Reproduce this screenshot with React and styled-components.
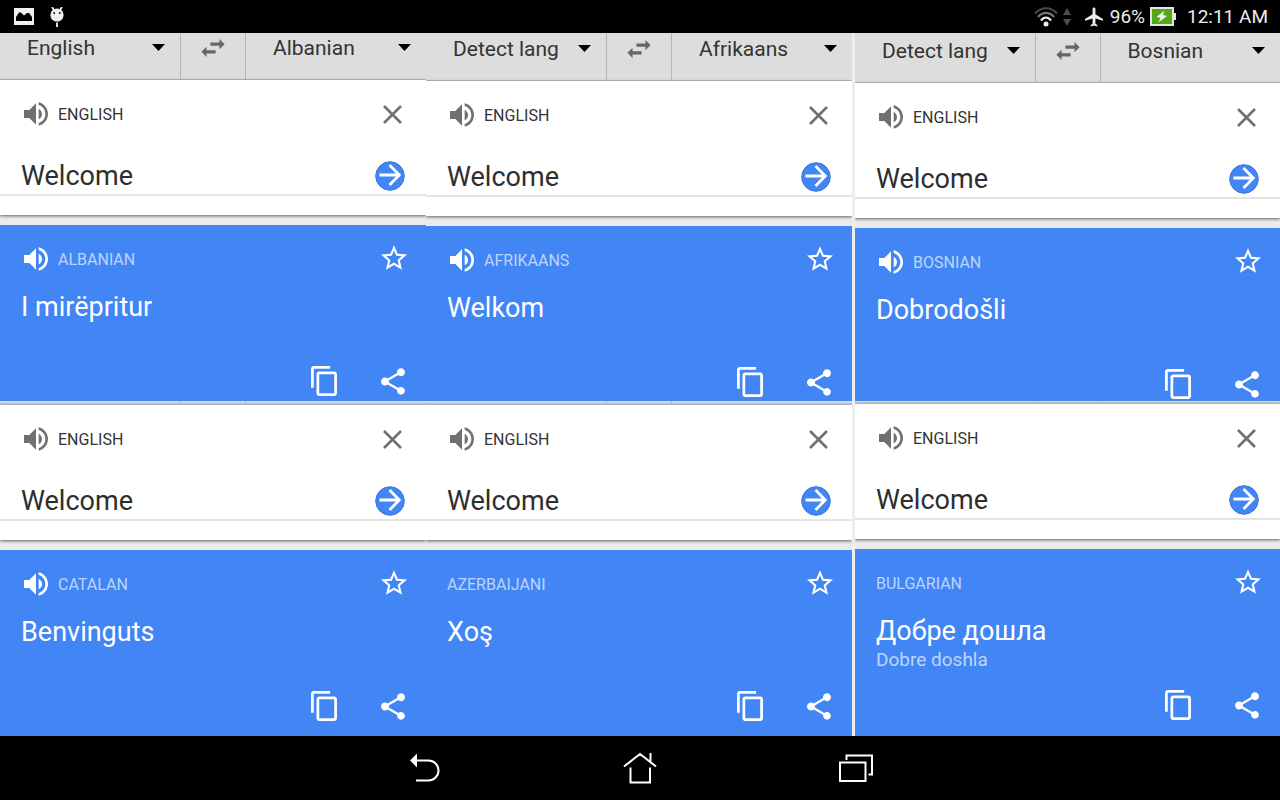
import React from "react";
import styled, { createGlobalStyle } from "styled-components";

const GlobalStyle = createGlobalStyle`
  *, *::before, *::after { box-sizing: border-box; }
  body { margin: 0; background: #000; }
  body, button, input, select { font-family: Roboto, "Noto Sans", sans-serif; }
`;

const Screen = styled.div`
  display: flex;
  flex-direction: column;
  min-height: 100vh;
  background: #000;
`;

const StatusBar = styled.header`
  display: flex;
  align-items: center;
  justify-content: space-between;
  height: 33px;
  padding: 0 12px 0 14px;
  color: #ededed;
  font-size: 19px;
  line-height: 33px;
`;

const StatusGroup = styled.div`
  display: flex;
  align-items: center;
  gap: ${(p) => p.$gap}px;
`;

const Charge = styled.span`
  margin-left: 2px;
`;

const Clock = styled.time`
  margin-left: 6px;
`;

const Board = styled.main`
  flex: 1;
  display: grid;
  grid-template-columns: 426fr 426fr 428fr;
  grid-template-rows: 368fr 335fr;
  background: #ebebeb;
`;

const Tile = styled.section`
  display: flex;
  flex-direction: column;
  min-width: 0;
  min-height: 0;
  overflow: hidden;
  background: #ebebeb;
  border-left: ${(p) => (p.$divided ? "3px solid #ededed" : "0")};
`;

const LanguageBar = styled.div`
  flex: none;
  display: flex;
  align-items: flex-end;
  height: ${(p) => p.$visible}px;
  overflow: hidden;
  background: ${(p) => (p.$sliver ? "#c9dbf5" : "#dddddd")};
  border-bottom: ${(p) => (p.$sliver ? 2 : 1)}px solid ${(p) => (p.$sliver ? "#c6c6c8" : "#bebebe")};
`;

const LanguageRow = styled.div`
  flex: 1;
  display: grid;
  grid-template-columns: 1fr 66px 1fr;
  height: 63px;
`;

const Picker = styled.label`
  display: flex;
  align-items: center;
  min-width: 0;
  padding: 0 15px 0 27px;
`;

const Select = styled.select`
  flex: 1;
  min-width: 0;
  padding: 0;
  border: 0;
  appearance: none;
  background: transparent;
  color: #333;
  font-size: 21px;
  line-height: 28px;
`;

const IconButton = styled.button`
  display: flex;
  align-items: center;
  justify-content: center;
  padding: 0;
  border: 0;
  background: transparent;
  color: inherit;
  svg { display: block; }
`;

const SwapButton = styled(IconButton)`
  border: solid #b5b5b5;
  border-width: 0 1px;
  color: #666;
`;

const VolumeButton = styled(IconButton)`
  padding: 0 10px 0 3px;
`;

const StarButton = styled(IconButton)`
  padding-bottom: 3px;
`;

const SourceCard = styled.div`
  flex: none;
  position: relative;
  height: 135px;
  margin-bottom: 10px;
  background: #fff;
  color: #707070;
  box-shadow: 0 1px 3px rgba(0, 0, 0, 0.6);
`;

const CardHead = styled.div`
  display: flex;
  align-items: center;
  justify-content: space-between;
  height: 68px;
  padding: 0 ${(p) => p.$right}px 0 21px;
`;

const Heading = styled.div`
  display: flex;
  align-items: center;
`;

const SourceLabel = styled.label`
  padding-top: 2px;
  color: #333;
  font-size: 16px;
  line-height: 20px;
`;

const TargetLabel = styled.h2`
  margin: 0;
  padding-top: 2px;
  color: #bcd5ff;
  font-size: 16px;
  font-weight: 400;
  line-height: 20px;
`;

const EntryRow = styled.div`
  display: flex;
  align-items: center;
  height: 48px;
  padding: 9px 21px 0 21px;
  border-bottom: 2px solid #e4e4e4;
`;

const Entry = styled.input`
  flex: 1;
  min-width: 0;
  height: 36px;
  padding: 0;
  border: 0;
  outline: 0;
  background: transparent;
  color: #2e2e2e;
  font-size: 27px;
`;

const TargetCard = styled.div`
  flex: 1 0 0;
  min-height: 0;
  background: #4285f4;
  color: #fff;
`;

const Result = styled.div`
  height: 68px;
  padding: 0 21px;
`;

const Translation = styled.p`
  margin: 0;
  font-size: 27px;
  line-height: 28px;
`;

const Romanized = styled.p`
  margin: 0;
  color: #bcd5ff;
  font-size: 19px;
  line-height: 30px;
`;

const Actions = styled.div`
  display: flex;
  align-items: center;
  justify-content: flex-end;
  gap: 44px;
  height: 40px;
  padding: 0 21px;
`;

const NavBar = styled.nav`
  display: flex;
  align-items: center;
  justify-content: center;
  gap: 182px;
  height: 64px;
  padding-left: 2px;
  color: #fff;
`;

const Icon = ({ d, box, w, h }) => (
  <svg width={w} height={h} viewBox={box} fill="currentColor" aria-hidden="true">
    <path d={d} />
  </svg>
);

const VolumeIcon = () => (
  <Icon
    w={24}
    h={24}
    box="3 3 18 18"
    d="M3 9v6h4l5 5V4L7 9H3zm13.5 3c0-1.77-1.02-3.29-2.5-4.03v8.05c1.48-.73 2.5-2.25 2.5-4.02zM14 3.23v2.06c2.89.86 5 3.54 5 6.71s-2.11 5.85-5 6.71v2.06c4.01-.91 7-4.49 7-8.77s-2.99-7.86-7-8.77z"
  />
);

const CloseIcon = () => (
  <svg width="19" height="19" viewBox="0 0 19 19" fill="none" stroke="currentColor" strokeWidth="2.6" aria-hidden="true">
    <path d="M1 1l17 17M18 1L1 18" />
  </svg>
);

const GoIcon = () => (
  <svg width="30" height="30" viewBox="0 0 30 30" fill="none" aria-hidden="true">
    <circle cx="15" cy="15" r="14.3" fill="#4285f4" stroke="#3b76dc" strokeWidth="1" />
    <path d="M4.5 14h19.5M14.5 4l9.8 10-9.8 10" stroke="#fff" strokeWidth="2.8" />
  </svg>
);

const StarIcon = () => (
  <Icon
    w={26}
    h={25}
    box="2 2 20 19"
    d="M22 9.24l-7.19-.62L12 2 9.19 8.63 2 9.24l5.46 4.73L5.82 21 12 17.27 18.18 21l-1.63-7.03L22 9.24zM12 15.4l-3.76 2.27 1-4.28-3.32-2.88 4.38-.38L12 6.1l1.71 4.04 4.38.38-3.32 2.88 1 4.28L12 15.4z"
  />
);

const CopyIcon = () => (
  <Icon
    w={26}
    h={30}
    box="2 1 19 22"
    d="M16 1H4c-1.1 0-2 .9-2 2v14h2V3h12V1zm3 4H8c-1.1 0-2 .9-2 2v14c0 1.1.9 2 2 2h11c1.1 0 2-.9 2-2V7c0-1.1-.9-2-2-2zm0 16H8V7h11v14z"
  />
);

const ShareIcon = () => (
  <Icon
    w={24}
    h={27}
    box="3 2 18 20"
    d="M18 16.08c-.76 0-1.44.3-1.96.77L8.91 12.7c.05-.23.09-.46.09-.7s-.04-.47-.09-.7l7.05-4.11c.54.5 1.25.81 2.04.81 1.66 0 3-1.34 3-3s-1.34-3-3-3-3 1.34-3 3c0 .24.04.47.09.7L8.04 9.81C7.5 9.31 6.79 9 6 9c-1.66 0-3 1.34-3 3s1.34 3 3 3c.79 0 1.5-.31 2.04-.81l7.12 4.16c-.05.21-.08.43-.08.65 0 1.61 1.31 2.92 2.92 2.92s2.92-1.31 2.92-2.92-1.31-2.92-2.92-2.92z"
  />
);

const SwapIcon = () => (
  <Icon
    w={24}
    h={18}
    box="3 5 18 14"
    d="M6.99 11L3 15l3.99 4v-2.700H14v-2.600H6.99v-2.700zM21 9l-3.99-4v2.700H10v2.600h7.01v2.700L21 9z"
  />
);

const Caret = () => <Icon w={13} h={7} box="0 0 13 7" d="M0 0h13L6.5 7z" />;

const PictureIcon = () => (
  <svg width="20" height="17" viewBox="0 0 20 17" aria-hidden="true">
    <rect width="20" height="17" fill="#f0f0f0" />
    <path d="M2 13V9L5 4.5h2L10 7.500 13 5h2l3 4v4z" fill="#000" />
  </svg>
);

const RobotIcon = () => (
  <svg width="14" height="20" viewBox="0 0 14 20" aria-hidden="true">
    <path d="M2 0l2 3M12 0l-2 3M7 15.5V20" stroke="#f0f0f0" strokeWidth="1.8" />
    <circle cx="7" cy="8" r="6.600" fill="#f0f0f0" />
    <circle cx="4.2" cy="6" r="0.900" fill="#000" />
    <circle cx="9.8" cy="6" r="0.900" fill="#000" />
  </svg>
);

const WifiIcon = () => (
  <svg width="24" height="20" viewBox="0 0 24 20" fill="none" strokeWidth="2.2" aria-hidden="true">
    <path d="M1 6.5C7-.5 17-.5 23 6.500" stroke="#4a4a4a" />
    <path d="M4 10C8.500 4.500 15.500 4.500 20 10" stroke="#777" />
    <path d="M7 13.500C10 9.500 14 9.500 17 13.500" stroke="#f0f0f0" />
    <circle cx="12" cy="17" r="2.500" fill="#f0f0f0" />
  </svg>
);

const TrafficIcon = () => <Icon w={8} h={18} box="0 0 8 18" d="M4 0l4 7H0zM0 11h8l-4 7z" />;

const PlaneIcon = () => (
  <Icon
    w={18}
    h={20}
    box="2 2 19 20"
    d="M21 16v-2l-8-5V3.5c0-.83-.67-1.5-1.5-1.5S10 2.67 10 3.5V9l-8 5v2l8-2.5V19l-2 1.5V22l3.5-1 3.5 1v-1.500L13 19v-5.500l8 2.500z"
  />
);

const BatteryIcon = () => (
  <svg width="26" height="19" viewBox="0 0 26 19" aria-hidden="true">
    <path d="M23 6h3v7h-3z" fill="#e6e6e6" />
    <rect x="1" y="1" width="22" height="17" fill="#53a813" stroke="#e6e6e6" strokeWidth="2" />
    <path d="M14.5 3.5L6.500 10l4 .8-2 4.700 8.500-6.500-4.200-1z" fill="#f2f2f2" />
  </svg>
);

const Dim = styled.span`
  display: flex;
  color: #4d4d4d;
  margin-right: 9px;
`;

const BackIcon = () => (
  <svg width="32" height="30" viewBox="0 0 32 30" fill="none" stroke="currentColor" strokeWidth="2" aria-hidden="true">
    <path d="M7 7.5h12.500a10 10 0 0 1 0 20H7" />
    <path d="M1 7.5l7-7v14z" fill="currentColor" stroke="none" />
  </svg>
);

const HomeIcon = () => (
  <svg width="34" height="32" viewBox="0 0 34 32" fill="none" stroke="currentColor" strokeWidth="2" aria-hidden="true">
    <path d="M1 14.500L17 2l16 12.500M27.500 1v9M7.500 15.500V30.500h19.500V15.500" />
  </svg>
);

const RecentIcon = () => (
  <svg width="34" height="28" viewBox="0 0 34 28" fill="none" stroke="currentColor" strokeWidth="2" aria-hidden="true">
    <path d="M1 8.500h25.500V27H1zM7.500 6V1.500H33V20.500h-3.500" />
  </svg>
);

const tiles = [
  { bar: 47, from: "English", to: "Albanian", text: "I mirëpritur", voice: true },
  { bar: 48, from: "Detect lang", to: "Afrikaans", text: "Welkom", voice: true },
  { bar: 50, from: "Detect lang", to: "Bosnian", text: "Dobrodošli", voice: true, divided: true },
  { bar: 4, sliver: true, from: "Detect lang", to: "Catalan", text: "Benvinguts", voice: true },
  { bar: 4, sliver: true, from: "Detect lang", to: "Azerbaijani", text: "Xoş" },
  { bar: 3, sliver: true, from: "Detect lang", to: "Bulgarian", text: "Добре дошла", roman: "Dobre doshla", divided: true },
];

function LanguagePicker({ label, value }) {
  return (
    <Picker>
      <Select aria-label={label} defaultValue={value}>
        <option>{value}</option>
      </Select>
      <Caret />
    </Picker>
  );
}

function TranslationTile({ tile, id }) {
  return (
    <Tile $divided={tile.divided}>
      <LanguageBar $visible={tile.bar} $sliver={tile.sliver}>
        <LanguageRow>
          {tile.sliver ? <span /> : <LanguagePicker label="Source language" value={tile.from} />}
          <SwapButton aria-label="Swap languages">{!tile.sliver && <SwapIcon />}</SwapButton>
          {tile.sliver ? <span /> : <LanguagePicker label="Target language" value={tile.to} />}
        </LanguageRow>
      </LanguageBar>
      <SourceCard>
        <CardHead $right={24}>
          <Heading>
            <VolumeButton aria-label="Listen to source"><VolumeIcon /></VolumeButton>
            <SourceLabel htmlFor={id}>ENGLISH</SourceLabel>
          </Heading>
          <IconButton aria-label="Clear"><CloseIcon /></IconButton>
        </CardHead>
        <EntryRow>
          <Entry id={id} type="text" defaultValue="Welcome" />
          <IconButton aria-label="Translate"><GoIcon /></IconButton>
        </EntryRow>
      </SourceCard>
      <TargetCard>
        <CardHead $right={19}>
          <Heading>
            {tile.voice && (
              <VolumeButton aria-label="Listen to translation"><VolumeIcon /></VolumeButton>
            )}
            <TargetLabel>{tile.to.toUpperCase()}</TargetLabel>
          </Heading>
          <StarButton aria-label="Save to phrasebook"><StarIcon /></StarButton>
        </CardHead>
        <Result>
          <Translation>{tile.text}</Translation>
          {tile.roman && <Romanized>{tile.roman}</Romanized>}
        </Result>
        <Actions>
          <IconButton aria-label="Copy"><CopyIcon /></IconButton>
          <IconButton aria-label="Share"><ShareIcon /></IconButton>
        </Actions>
      </TargetCard>
    </Tile>
  );
}

export default function App() {
  return (
    <>
      <GlobalStyle />
      <Screen>
        <StatusBar>
          <StatusGroup $gap={16}>
            <PictureIcon />
            <RobotIcon />
          </StatusGroup>
          <StatusGroup $gap={5}>
            <WifiIcon />
            <Dim><TrafficIcon /></Dim>
            <PlaneIcon />
            <Charge>96%</Charge>
            <BatteryIcon />
            <Clock>12:11 AM</Clock>
          </StatusGroup>
        </StatusBar>
        <Board>
          {tiles.map((tile) => (
            <TranslationTile key={tile.to} tile={tile} id={`source-${tile.to}`} />
          ))}
        </Board>
        <NavBar aria-label="System navigation">
          <IconButton aria-label="Back"><BackIcon /></IconButton>
          <IconButton aria-label="Home"><HomeIcon /></IconButton>
          <IconButton aria-label="Recent apps"><RecentIcon /></IconButton>
        </NavBar>
      </Screen>
    </>
  );
}
